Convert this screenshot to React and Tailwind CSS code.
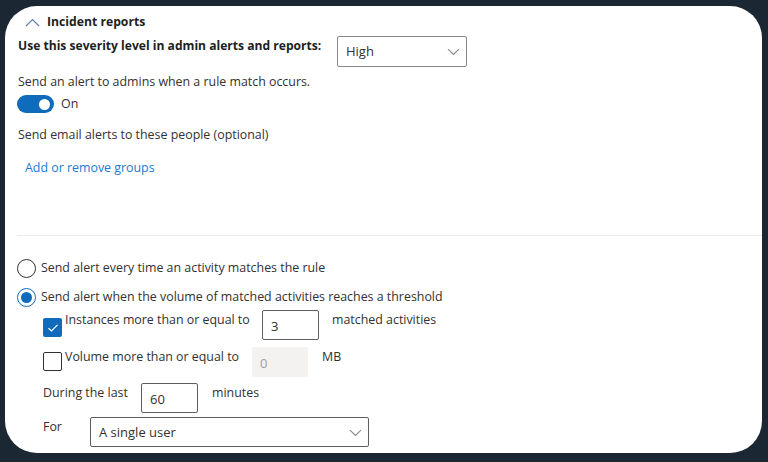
import React from "react";

const Chevron = ({ className = "" }) => (
  <svg width="13" height="8" viewBox="0 0 13 8" className={className}>
    <path d="M1 1.2 L6.5 6.5 L12 1.2" fill="none" stroke="#8a8886" strokeWidth="1.1" />
  </svg>
);

export default function App() {
  return (
    <div
      className="w-[768px] h-[462px] bg-[#1b2733] pt-[6px] pl-[5px] pr-[6px] pb-[9px] text-[12.4px] text-[#323130]"
      style={{ fontFamily: '"Open Sans", "Noto Sans", sans-serif' }}
    >
      <div className="w-full h-full bg-white rounded-[32px] overflow-hidden flex flex-col">
        {/* header */}
        <div className="flex items-center h-5 mt-[6px] pl-[20px]">
          <svg width="15" height="9" viewBox="0 0 15 9">
            <path d="M1 8 L7.5 1.5 L14 8" fill="none" stroke="#5c7fb5" strokeWidth="1.2" />
          </svg>
          <span className="ml-[7px] font-bold text-[#201f1e] text-[12.2px]">Incident reports</span>
        </div>

        {/* severity */}
        <div className="flex items-start mt-[4px] pl-[13px]">
          <div className="w-[319px] leading-5 font-bold text-[#201f1e] text-[12.1px]">
            Use this severity level in admin alerts and reports:
          </div>
          <div className="w-[130px] h-[31px] border border-[#8a8886] rounded-[2px] flex items-center justify-between pl-[8px] pr-[6px]">
            <span className="text-[13px]">High</span>
            <Chevron />
          </div>
        </div>

        <div className="mt-[5px] pl-[13px] leading-5">Send an alert to admins when a rule match occurs.</div>

        <div className="flex items-center mt-[3px] pl-[12px] h-[18px]">
          <div className="w-[37px] h-[18px] rounded-full bg-[#0f6cbd] flex items-center justify-end pr-[4px]">
            <div className="w-[11px] h-[11px] rounded-full bg-white" />
          </div>
          <span className="ml-[7px]">On</span>
        </div>

        <div className="mt-[12px] pl-[13px] leading-5">Send email alerts to these people (optional)</div>

        <div className="mt-[13px] pl-[20px] leading-5 text-[#1a7ad4]">Add or remove groups</div>

        <div className="mt-[57px] ml-[12px] h-px bg-[#edebe9]" />

        {/* radios */}
        <div className="flex items-center mt-[22px] pl-[12px] h-5">
          <div className="w-[19px] h-[19px] rounded-full border border-[#323130]" />
          <span className="ml-[5px]">Send alert every time an activity matches the rule</span>
        </div>
        <div className="flex items-center mt-[9px] pl-[12px] h-5">
          <div className="w-[19px] h-[19px] rounded-full border border-[#0f6cbd] flex items-center justify-center">
            <div className="w-[11px] h-[11px] rounded-full bg-[#0f6cbd]" />
          </div>
          <span className="ml-[5px]">Send alert when the volume of matched activities reaches a threshold</span>
        </div>

        {/* instances */}
        <div className="flex items-start mt-[3px] pl-[38px]">
          <div className="mt-[8px] w-[19px] h-[19px] rounded-[2px] bg-[#0f6cbd] flex items-center justify-center">
            <svg width="12" height="10" viewBox="0 0 12 10">
              <path d="M1.5 5.2 L4.5 8 L10.5 1.8" fill="none" stroke="white" strokeWidth="1.2" />
            </svg>
          </div>
          <div className="ml-[3px] w-[197px] leading-5">Instances more than or equal to</div>
          <div className="w-[57px] h-[30px] border border-[#605e5c] rounded-[2px] flex items-center pl-[8px] pt-[3px] text-[13px]">3</div>
          <div className="ml-[13px] leading-5">matched activities</div>
        </div>

        {/* volume */}
        <div className="flex items-start mt-[7px] pl-[38px]">
          <div className="mt-[5px] w-[19px] h-[19px] rounded-[2px] border border-[#323130]" />
          <div className="ml-[3px] w-[187px] leading-5">Volume more than or equal to</div>
          <div className="w-[56px] h-[30px] bg-[#f3f2f1] rounded-[2px] flex items-center pl-[8px] pt-[3px] text-[#a19f9d] text-[13px]">0</div>
          <div className="ml-[14px] leading-5">MB</div>
        </div>

        {/* during */}
        <div className="flex items-start mt-[6px] pl-[38px]">
          <div className="w-[98px] leading-5">During the last</div>
          <div className="w-[57px] h-[30px] border border-[#605e5c] rounded-[2px] flex items-center pl-[8px] pt-[3px] text-[13px]">60</div>
          <div className="ml-[14px] leading-5">minutes</div>
        </div>

        {/* for */}
        <div className="flex items-start mt-[4px] pl-[38px]">
          <div className="w-[47px] leading-5">For</div>
          <div className="w-[279px] h-[30px] border border-[#605e5c] rounded-[2px] flex items-center justify-between pl-[8px] pr-[6px] pt-[1px] text-[13px]">
            <span>A single user</span>
            <Chevron />
          </div>
        </div>
      </div>
    </div>
  );
}
